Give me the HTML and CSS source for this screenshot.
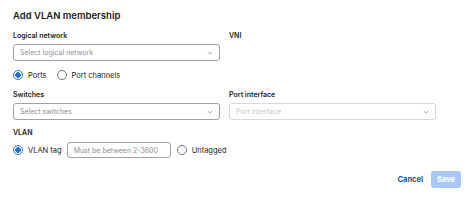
FILE: index.html
```html
<!DOCTYPE html>
<html lang="en">
<head>
    <meta charset="UTF-8">
    <title>Add VLAN membership</title>
    <link rel="stylesheet" href="styles.css">
</head>
<body>
    <div class="dialog">
        <div class="dialog-title">Add VLAN membership</div>

        <div class="form-grid">
            <div class="field">
                <label class="field-label">Logical network</label>
                <div class="select">
                    <span class="placeholder">Select logical network</span>
                    <svg class="chevron" viewBox="0 0 8 5"><path d="M1 1l3 3 3-3"/></svg>
                </div>
            </div>
            <div class="field">
                <label class="field-label">VNI</label>
            </div>
        </div>

        <div class="radio-row">
            <label class="radio"><span class="dot checked"></span>Ports</label>
            <label class="radio"><span class="dot"></span>Port channels</label>
        </div>

        <div class="form-grid">
            <div class="field">
                <label class="field-label">Switches</label>
                <div class="select">
                    <span class="placeholder">Select switches</span>
                    <svg class="chevron" viewBox="0 0 8 5"><path d="M1 1l3 3 3-3"/></svg>
                </div>
            </div>
            <div class="field">
                <label class="field-label">Port interface</label>
                <div class="select disabled">
                    <span class="placeholder">Port interface</span>
                    <svg class="chevron" viewBox="0 0 8 5"><path d="M1 1l3 3 3-3"/></svg>
                </div>
            </div>
        </div>

        <div class="field vlan">
            <label class="field-label">VLAN</label>
            <div class="radio-row tight">
                <label class="radio"><span class="dot checked"></span>VLAN tag</label>
                <div class="text-input"><span class="placeholder">Must be between 2-3600</span></div>
                <label class="radio"><span class="dot"></span>Untagged</label>
            </div>
        </div>

        <div class="footer">
            <button class="btn-link">Cancel</button>
            <button class="btn-primary" disabled>Save</button>
        </div>
    </div>
</body>
</html>
```

FILE: styles.css
```css
body {
    margin: 0;
    background: #fff;
    font-family: Inter, "Noto Sans", sans-serif;
    color: #1a1d21;
}

.dialog {
    padding: 8px 13px 0 13px;
}

.dialog-title {
    font-size: 9.5px;
    font-weight: 600;
    line-height: 16px;
    margin-bottom: 7px;
}

.form-grid {
    display: grid;
    grid-template-columns: 207px 207px;
    gap: 9px;
}

.field {
    display: flex;
    flex-direction: column;
    gap: 3px;
}

.field-label {
    font-size: 7px;
    font-weight: 600;
    line-height: 10px;
}

.select {
    height: 17px;
    box-sizing: border-box;
    border: 1px solid #9ea3a9;
    border-radius: 3px;
    display: flex;
    align-items: center;
    justify-content: space-between;
    padding: 0 6px 0 6px;
}

.select.disabled {
    border-color: #d6d9dd;
}

.placeholder {
    font-size: 7px;
    color: #8b9097;
}

.select.disabled .placeholder {
    color: #c3c7cc;
}

.chevron {
    width: 6px;
    height: 4px;
    fill: none;
    stroke: #8b9097;
    stroke-width: 1;
}

.radio-row {
    display: flex;
    align-items: center;
    gap: 10px;
    margin: 9px 0 10px 0;
}

.radio {
    display: flex;
    align-items: center;
    gap: 5px;
    font-size: 7.5px;
}

.dot {
    width: 10px;
    height: 10px;
    box-sizing: border-box;
    border: 1px solid #6e747c;
    border-radius: 50%;
}

.dot.checked {
    border: 1px solid #2b6fd6;
    background: radial-gradient(circle, #2b6fd6 0 2.6px, #fff 3px);
}

.vlan {
    margin-top: 8px;
}

.radio-row.tight {
    margin: 1px 0 0 0;
    gap: 6px;
}

.radio-row.tight .radio:first-child {
    margin-right: -1px;
}

.text-input {
    width: 104px;
    height: 16px;
    box-sizing: border-box;
    border: 1px solid #9ea3a9;
    border-radius: 3px;
    display: flex;
    align-items: center;
    padding: 0 6px;
}

.footer {
    display: flex;
    justify-content: flex-end;
    align-items: center;
    gap: 8px;
    margin-top: 13px;
}

.btn-link {
    border: none;
    background: none;
    padding: 0;
    font-family: inherit;
    font-size: 7.5px;
    font-weight: 700;
    color: #1d4f91;
}

.btn-primary {
    width: 30px;
    height: 17px;
    border: none;
    border-radius: 3px;
    background: #a8c9f8;
    color: #fff;
    font-family: inherit;
    font-size: 7.5px;
    font-weight: 700;
    padding: 0;
}
```
